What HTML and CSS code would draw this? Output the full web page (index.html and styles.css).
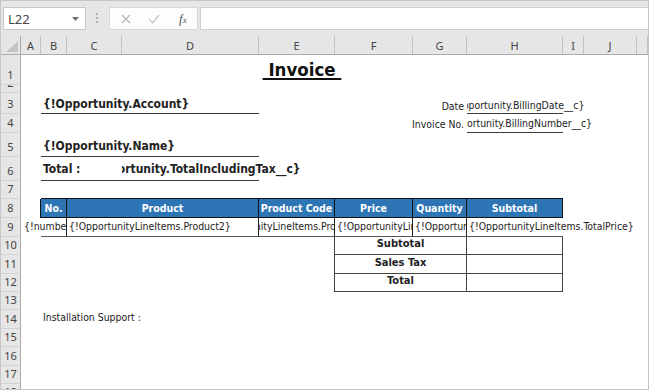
FILE: index.html
```html
<!DOCTYPE html>
<html>
<head>
<meta charset="utf-8">
<title>Invoice template</title>
<link rel="stylesheet" href="styles.css">
</head>
<body>
<div class="app">
  <div class="toolbar">
    <div class="namebox">
      <span class="nb-text">L22</span>
      <svg class="nb-arrow" width="7" height="4" viewBox="0 0 7 4"><path d="M0 0h7L3.5 4z" fill="#6f6f6f"/></svg>
    </div>
    <div class="grip"><i></i><i></i><i></i></div>
    <div class="fxbox">
      <svg class="ic-x" width="10" height="10" viewBox="0 0 10 10"><path d="M1 1l8 8M9 1l-8 8" stroke="#b4b4b4" stroke-width="1.1" fill="none"/></svg>
      <svg class="ic-ok" width="12" height="10" viewBox="0 0 12 10"><path d="M1 5.2l3.6 3.6L11 1.2" stroke="#b4b4b4" stroke-width="1.1" fill="none"/></svg>
      <span class="fx">f<small>x</small></span>
    </div>
    <div class="formula"></div>
  </div>

  <div class="sheet">
    <div class="row colhead">
      <div class="corner"><svg width="12" height="11" viewBox="0 0 12 11"><path d="M12 0V11H0z" fill="#c4c4c4"/></svg></div>
      <div class="ch">A</div><div class="ch">B</div><div class="ch">C</div><div class="ch">D</div><div class="ch">E</div><div class="ch">F</div><div class="ch">G</div><div class="ch">H</div><div class="ch">I</div><div class="ch">J</div><div class="ch"></div>
    </div>

    <div class="row h30">
      <div class="rh">1</div><div class="c"></div>
      <div class="c s7 title"><span class="title-text"> Invoice </span></div>
    </div>
    <div class="row h8"><div class="rh">2</div></div>
    <div class="row h21 low2">
      <div class="rh">3</div><div class="c"></div>
      <div class="c s3 b ul">{!Opportunity.Account}</div>
      <div class="c"></div><div class="c"></div>
      <div class="c rt">Date</div>
      <div class="c ctr ul clipl">{!Opportunity.BillingDate__c}</div>
    </div>
    <div class="row h19 low1">
      <div class="rh">4</div><div class="c"></div>
      <div class="c s3"></div>
      <div class="c"></div><div class="c"></div>
      <div class="c rt">Invoice No.</div>
      <div class="c ctr ul clipl">{!Opportunity.BillingNumber__c}</div>
    </div>
    <div class="row h24 low1">
      <div class="rh">5</div><div class="c"></div>
      <div class="c s3 b ul">{!Opportunity.Name}</div>
    </div>
    <div class="row h24">
      <div class="rh">6</div><div class="c"></div>
      <div class="c b ul">Total :</div>
      <div class="c ul"></div>
      <div class="c b ctr ul clipl">{!Opportunity.TotalIncludingTax__c}</div>
    </div>
    <div class="row h18"><div class="rh">7</div></div>
    <div class="row h19">
      <div class="rh">8</div><div class="c edge"></div>
      <div class="c th">No.</div>
      <div class="c th s2">Product</div>
      <div class="c th">Product Code</div>
      <div class="c th">Price</div>
      <div class="c th">Quantity</div>
      <div class="c th">Subtotal</div>
    </div>
    <div class="row h19">
      <div class="rh">9</div><div class="c"></div>
      <div class="c td clipr"><span class="shift">{!number}</span></div>
      <div class="c td s2">{!OpportunityLineItems.Product2}</div>
      <div class="c td ctr clip">{!OpportunityLineItems.ProductCode}</div>
      <div class="c td clip">{!OpportunityLineItems.UnitPrice}</div>
      <div class="c td clip">{!OpportunityLineItems.Quantity}</div>
      <div class="c tdl">{!OpportunityLineItems.TotalPrice}</div>
    </div>
    <div class="row h18">
      <div class="rh">10</div><div class="c s4"></div><div class="c bxl"></div>
      <div class="c s2 bb ctr bx">Subtotal</div><div class="c bx"></div>
    </div>
    <div class="row h19">
      <div class="rh">11</div><div class="c s4"></div><div class="c bxl"></div>
      <div class="c s2 bb ctr bx">Sales Tax</div><div class="c bx"></div>
    </div>
    <div class="row h18">
      <div class="rh">12</div><div class="c s4"></div><div class="c bxl"></div>
      <div class="c s2 bb ctr bx">Total</div><div class="c bx"></div>
    </div>
    <div class="row h18"><div class="rh">13</div></div>
    <div class="row h19">
      <div class="rh">14</div><div class="c"></div>
      <div class="c up2">Installation Support :</div>
    </div>
    <div class="row h18"><div class="rh">15</div></div>
    <div class="row h19"><div class="rh">16</div></div>
    <div class="row h18"><div class="rh">17</div></div>
    <div class="row h18"><div class="rh">18</div></div>
  </div>
</div>
</body>
</html>
```

FILE: styles.css
```css
* {
  box-sizing: border-box;
  margin: 0;
  padding: 0;
}

body {
  margin: 0;
  width: 650px;
  height: 391px;
  overflow: hidden;
  background: #ffffff;
  font-family: "DejaVu Sans Condensed", "DejaVu Sans", sans-serif;
}

.app {
  width: 649px;
  height: 390px;
  border: 1px solid #c6c6c6;
  background: #ffffff;
  overflow: hidden;
  display: flex;
  flex-direction: column;
}

/* ---------- formula bar ---------- */
.toolbar {
  flex: none;
  height: 35px;
  background: #e6e6e6;
  display: flex;
  align-items: flex-start;
  padding: 6px 0 0 2px;
}

.namebox {
  width: 83px;
  height: 23px;
  background: #ffffff;
  border: 1px solid #c8c8c8;
  display: flex;
  align-items: center;
  padding: 0 6px 0 4px;
  justify-content: space-between;
}

.nb-text {
  font-family: "Noto Sans", "Open Sans", sans-serif;
  font-size: 13px;
  color: #444444;
}

.grip {
  margin: 6px 0 0 10px;
  width: 3px;
  display: flex;
  flex-direction: column;
  gap: 2px;
}

.grip i {
  display: block;
  width: 2px;
  height: 2px;
  background: #b0b0b0;
}

.fxbox {
  margin-left: 10px;
  width: 89px;
  height: 23px;
  background: #fdfdfd;
  border: 1px solid #d6d6d6;
  display: flex;
  align-items: center;
  padding-left: 11px;
}

.ic-ok {
  margin-left: 17px;
}

.fx {
  margin-left: 19px;
  font-family: "Liberation Serif", serif;
  font-style: italic;
  font-size: 13px;
  color: #555555;
  line-height: 1;
}

.fx small {
  font-size: 9px;
}

.formula {
  margin-left: 2px;
  flex: 1;
  height: 23px;
  background: #ffffff;
  border: 1px solid #d0d0d0;
  border-right: 0;
}

/* ---------- grid ---------- */
.sheet {
  flex: 1;
  overflow: hidden;
}

.row {
  display: grid;
  grid-template-columns: 20px 20px 26px 55px 137px 76px 78px 54px 96px 21px 53px 11px;
}

.h8 { height: 8px; }
.h18 { height: 18px; }
.h19 { height: 19px; }
.h21 { height: 21px; }
.h24 { height: 24px; }
.h30 { height: 30px; }

.colhead {
  height: 19px;
  background: #e6e6e6;
  border-bottom: 1px solid #ababab;
}

.corner {
  border-right: 1px solid #ababab;
  display: flex;
  align-items: flex-end;
  justify-content: flex-end;
  padding: 0 2px 2px 0;
}

.ch {
  border-right: 1px solid #c2c2c2;
  display: flex;
  align-items: center;
  justify-content: center;
  font-family: "Noto Sans", "Open Sans", sans-serif;
  font-size: 11px;
  color: #444444;
}

.rh {
  background: #e6e6e6;
  border-right: 1px solid #ababab;
  border-bottom: 1px solid #d3d3d3;
  display: flex;
  align-items: flex-end;
  justify-content: center;
  overflow: hidden;
  font-family: "Noto Sans", "Open Sans", sans-serif;
  font-size: 11px;
  line-height: 13px;
  padding-bottom: 3px;
  color: #444444;
}

.c {
  min-width: 0;
  display: flex;
  align-items: flex-end;
  white-space: nowrap;
  padding: 0 2px 3px;
  font-size: 10.4px;
  line-height: 14px;
  color: #222222;
}

.low2 .c { padding-bottom: 1px; }
.low1 .c { padding-bottom: 2px; }
.c.up2 { padding-bottom: 5px; }

.s2 { grid-column: span 2; }
.s3 { grid-column: span 3; }
.s4 { grid-column: span 4; }
.s7 { grid-column: span 7; }

.b {
  font-weight: bold;
  font-size: 12px;
  line-height: 15px;
}

.bb {
  font-weight: bold;
  font-size: 11px;
}

.ctr { justify-content: center; }

.rt {
  justify-content: flex-end;
  padding-right: 3px;
}

.ul { border-bottom: 1px solid #3a3a3a; }

.clipl { clip-path: inset(0 -300px 0 0); }
.clipr { clip-path: inset(0 0 0 -60px); }
.clip { overflow: hidden; }

.shift { margin-left: -19px; }

.title {
  justify-content: center;
  font-size: 18.5px;
  font-weight: bold;
  line-height: 22px;
  padding-bottom: 4px;
  color: #111111;
}

.title-text {
  white-space: pre;
  text-decoration: underline;
  text-decoration-thickness: 1.5px;
  text-underline-offset: 2px;
}

/* table header */
.edge { border-right: 1px solid #111111; }

.th {
  margin-top: -1px;
  background: #2e75b6;
  color: #ffffff;
  font-weight: bold;
  font-size: 10.5px;
  line-height: 15px;
  justify-content: center;
  border-top: 1px solid #111111;
  border-right: 1px solid #111111;
  border-bottom: 1px solid #111111;
  padding: 0 0 1px;
}

.td {
  border-right: 1px solid #222222;
  border-bottom: 1px solid #555555;
}

.tdl { border-bottom: 1px solid #555555; }

.bxl { border-right: 1px solid #444444; }

.bx {
  border-right: 1px solid #444444;
  border-bottom: 1px solid #444444;
}
```
